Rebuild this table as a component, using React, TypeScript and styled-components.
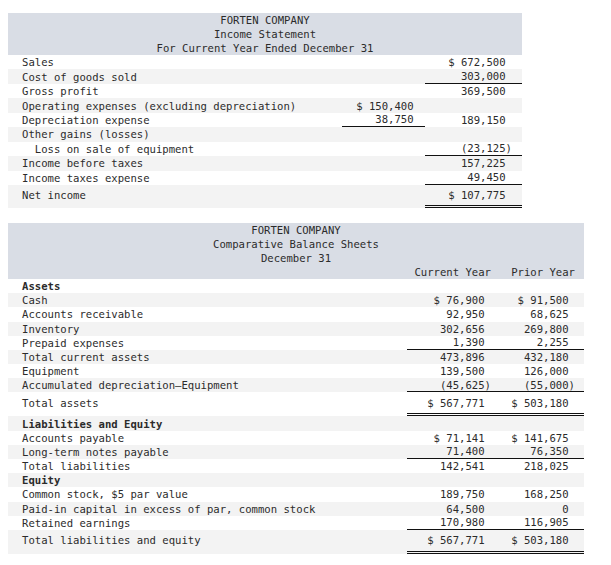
import React from "react";
import styled, { createGlobalStyle } from "styled-components";

const Global = createGlobalStyle`
  html, body { margin: 0; padding: 0; background: #ffffff; }
  body { font-family: "DejaVu Sans Mono", "Liberation Mono", monospace; color: #2b2b2b; }
`;

const Page = styled.div`
  display: flex;
  flex-direction: column;
  align-items: flex-start;
  gap: 14.5px;
  padding: 13px 0 0 8px;
  font-size: 10.6px;
`;

const Table = styled.div<{ $width: number }>`
  width: ${(p) => p.$width}px;
  display: flex;
  flex-direction: column;
`;

const Header = styled.div`
  background: #d9dde5;
  display: flex;
  flex-direction: column;
`;

const HeaderLine = styled.div`
  height: 14px;
  line-height: 14px;
  text-align: center;
  white-space: pre;
`;

const Row = styled.div<{ $cols: string; $h: number; $striped: boolean }>`
  display: grid;
  grid-template-columns: ${(p) => p.$cols};
  height: ${(p) => p.$h}px;
  background: ${(p) => (p.$striped ? "#f3f3f3" : "#ffffff")};
`;

const Label = styled.div<{ $indent: number; $bold: boolean; $total: boolean }>`
  display: flex;
  align-items: center;
  box-sizing: border-box;
  padding-left: ${(p) => 14 + p.$indent * 6.4}px;
  padding-bottom: ${(p) => (p.$total ? 3 : 0)}px;
  font-weight: ${(p) => (p.$bold ? "bold" : "normal")};
  white-space: pre;
`;

type Line = "none" | "single" | "double";

const Amount = styled.div<{ $line: Line; $pad: number; $total: boolean }>`
  display: flex;
  align-items: center;
  justify-content: flex-end;
  box-sizing: border-box;
  padding-right: ${(p) => p.$pad}px;
  white-space: pre;
  border-bottom: ${(p) =>
    p.$line === "single"
      ? "1px solid #111111"
      : p.$line === "double"
      ? "3px double #111111"
      : "0"};
  padding-bottom: ${(p) => (p.$total && p.$line !== "double" ? 3 : 0)}px;
`;

const ColHead = styled.div<{ $pad: number }>`
  height: 14px;
  line-height: 14px;
  text-align: right;
  padding-right: ${(p) => p.$pad}px;
  white-space: pre;
`;

const ColHeadRow = styled.div<{ $cols: string }>`
  display: grid;
  grid-template-columns: ${(p) => p.$cols};
`;

type Cell = { v: string; line?: Line } | null;
type RowData = {
  label: string;
  indent?: number;
  bold?: boolean;
  total?: boolean;
  h?: number;
  cells: Cell[];
};

const fmt = (v: string) => (v.endsWith(")") ? v : v + "\u00a0");

const Statement: React.FC<{
  width: number;
  cols: string;
  pads: number[];
  rowH: number;
  title: string[];
  colHeads?: string[];
  rows: RowData[];
}> = ({ width, cols, pads, rowH, title, colHeads, rows }) => (
  <Table $width={width}>
    <Header>
      {title.map((t) => (
        <HeaderLine key={t}>{t}</HeaderLine>
      ))}
      {colHeads && (
        <ColHeadRow $cols={cols}>
          <div />
          {colHeads.map((c, i) => (
            <ColHead key={c} $pad={pads[i]}>
              {c}
            </ColHead>
          ))}
        </ColHeadRow>
      )}
    </Header>
    {rows.map((r, i) => (
      <Row key={r.label} $cols={cols} $h={r.h ?? rowH} $striped={i % 2 === 1}>
        <Label $indent={r.indent ?? 0} $bold={!!r.bold} $total={!!r.total}>
          {r.label}
        </Label>
        {r.cells.map((c, j) => (
          <Amount
            key={j}
            $line={c?.line ?? "none"}
            $pad={pads[j]}
            $total={!!r.total}
          >
            {c ? fmt(c.v) : ""}
          </Amount>
        ))}
      </Row>
    ))}
  </Table>
);

const incomeRows: RowData[] = [
  { label: "Sales", cells: [null, { v: "$ 672,500" }] },
  { label: "Cost of goods sold", cells: [null, { v: "303,000", line: "single" }] },
  { label: "Gross profit", cells: [null, { v: "369,500" }] },
  { label: "Operating expenses (excluding depreciation)", cells: [{ v: "$ 150,400" }, null] },
  { label: "Depreciation expense", cells: [{ v: "38,750", line: "single" }, { v: "189,150" }] },
  { label: "Other gains (losses)", cells: [null, null] },
  { label: "Loss on sale of equipment", indent: 2, cells: [null, { v: "(23,125)", line: "single" }] },
  { label: "Income before taxes", cells: [null, { v: "157,225" }] },
  { label: "Income taxes expense", cells: [null, { v: "49,450", line: "single" }] },
  { label: "Net income", total: true, h: 23.5, cells: [null, { v: "$ 107,775", line: "double" }] },
];

const balanceRows: RowData[] = [
  { label: "Assets", bold: true, cells: [null, null] },
  { label: "Cash", cells: [{ v: "$ 76,900" }, { v: "$ 91,500" }] },
  { label: "Accounts receivable", cells: [{ v: "92,950" }, { v: "68,625" }] },
  { label: "Inventory", cells: [{ v: "302,656" }, { v: "269,800" }] },
  { label: "Prepaid expenses", cells: [{ v: "1,390", line: "single" }, { v: "2,255", line: "single" }] },
  { label: "Total current assets", cells: [{ v: "473,896" }, { v: "432,180" }] },
  { label: "Equipment", cells: [{ v: "139,500" }, { v: "126,000" }] },
  {
    label: "Accumulated depreciation\u2014Equipment",
    cells: [{ v: "(45,625)", line: "single" }, { v: "(55,000)", line: "single" }],
  },
  {
    label: "Total assets",
    total: true,
    h: 24,
    cells: [{ v: "$ 567,771", line: "double" }, { v: "$ 503,180", line: "double" }],
  },
  { label: "Liabilities and Equity", bold: true, cells: [null, null] },
  { label: "Accounts payable", cells: [{ v: "$ 71,141" }, { v: "$ 141,675" }] },
  {
    label: "Long-term notes payable",
    cells: [{ v: "71,400", line: "single" }, { v: "76,350", line: "single" }],
  },
  { label: "Total liabilities", cells: [{ v: "142,541" }, { v: "218,025" }] },
  { label: "Equity", bold: true, cells: [null, null] },
  { label: "Common stock, $5 par value", cells: [{ v: "189,750" }, { v: "168,250" }] },
  { label: "Paid-in capital in excess of par, common stock", cells: [{ v: "64,500" }, { v: "0" }] },
  {
    label: "Retained earnings",
    cells: [{ v: "170,980", line: "single" }, { v: "116,905", line: "single" }],
  },
  {
    label: "Total liabilities and equity",
    total: true,
    h: 24,
    cells: [{ v: "$ 567,771", line: "double" }, { v: "$ 503,180", line: "double" }],
  },
];

export default function App() {
  return (
    <>
      <Global />
      <Page>
        <Statement
          width={514}
          cols="334px 83px 97px"
          pads={[5, 10]}
          rowH={14.45}
          title={["FORTEN COMPANY", "Income Statement", "For Current Year Ended December 31"]}
          rows={incomeRows}
        />
        <Statement
          width={576}
          cols="399px 93px 84px"
          pads={[9, 9]}
          rowH={14.2}
          title={["FORTEN COMPANY", "Comparative Balance Sheets", "December 31"]}
          colHeads={["Current Year", "Prior Year"]}
          rows={balanceRows}
        />
      </Page>
    </>
  );
}
